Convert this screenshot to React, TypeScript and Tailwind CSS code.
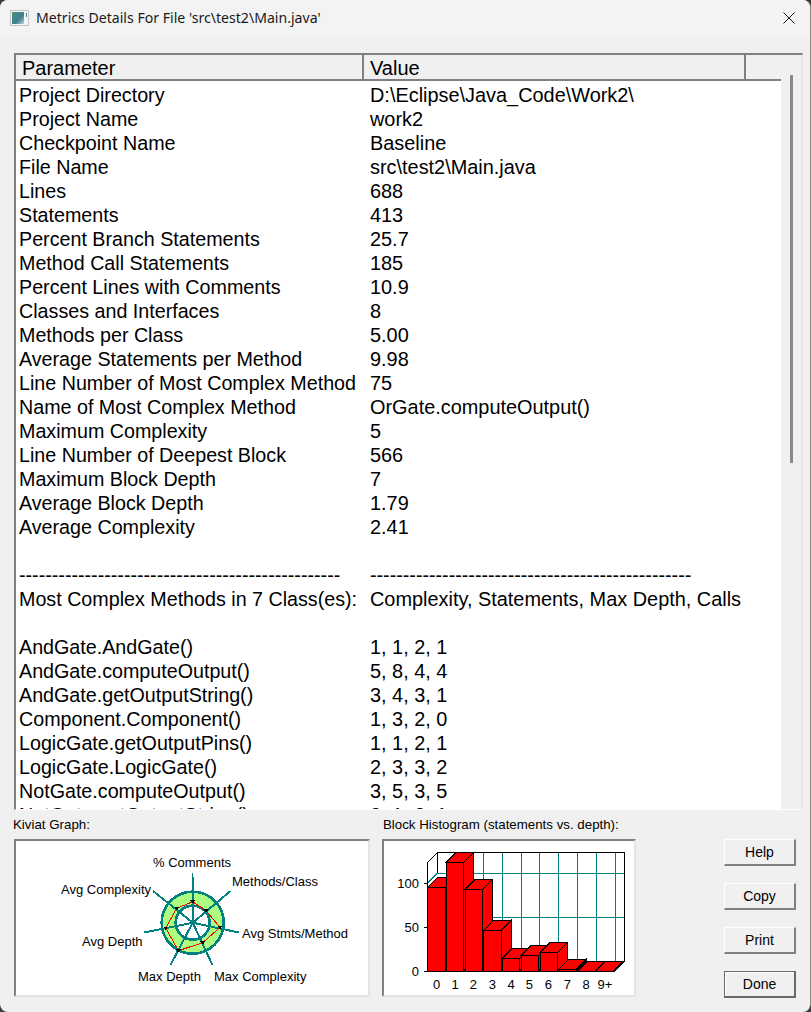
const dashes = '-------------------------------------------------'

const rows: [string, string][] = [
  ['Project Directory', 'D:\\Eclipse\\Java_Code\\Work2\\'],
  ['Project Name', 'work2'],
  ['Checkpoint Name', 'Baseline'],
  ['File Name', 'src\\test2\\Main.java'],
  ['Lines', '688'],
  ['Statements', '413'],
  ['Percent Branch Statements', '25.7'],
  ['Method Call Statements', '185'],
  ['Percent Lines with Comments', '10.9'],
  ['Classes and Interfaces', '8'],
  ['Methods per Class', '5.00'],
  ['Average Statements per Method', '9.98'],
  ['Line Number of Most Complex Method', '75'],
  ['Name of Most Complex Method', 'OrGate.computeOutput()'],
  ['Maximum Complexity', '5'],
  ['Line Number of Deepest Block', '566'],
  ['Maximum Block Depth', '7'],
  ['Average Block Depth', '1.79'],
  ['Average Complexity', '2.41'],
  ['', ''],
  [dashes, dashes],
  ['Most Complex Methods in 7 Class(es):', 'Complexity, Statements, Max Depth, Calls'],
  ['', ''],
  ['AndGate.AndGate()', '1, 1, 2, 1'],
  ['AndGate.computeOutput()', '5, 8, 4, 4'],
  ['AndGate.getOutputString()', '3, 4, 3, 1'],
  ['Component.Component()', '1, 3, 2, 0'],
  ['LogicGate.getOutputPins()', '1, 1, 2, 1'],
  ['LogicGate.LogicGate()', '2, 3, 3, 2'],
  ['NotGate.computeOutput()', '3, 5, 3, 5'],
  ['NotGate.getOutputString()', '2, 1, 2, 1'],
]

const spokes = [
  [192.5, 873],
  [230.5, 891],
  [239, 932.5],
  [212.5, 965],
  [170.5, 965],
  [144, 932.5],
  [153, 891],
]

const kiviatPoints = [
  [192.7, 901.7],
  [206, 910.7],
  [220, 927.3],
  [202.7, 942.7],
  [178.3, 950.7],
  [165.7, 928],
  [176.7, 908.3],
]

const kiviatLabels: [string, number, number][] = [
  ['% Comments', 153, 867],
  ['Methods/Class', 232, 886],
  ['Avg Stmts/Method', 242, 938],
  ['Max Complexity', 214, 981],
  ['Max Depth', 138, 981],
  ['Avg Depth', 82, 946],
  ['Avg Complexity', 61, 894],
]

// front left x, front top y of each bar
const bars = [
  [427.7, 887.3],
  [446.3, 862.3],
  [465.3, 889.3],
  [483.7, 930.3],
  [502.3, 958.3],
  [521.3, 955.3],
  [540.3, 952.3],
  [559, 969.3],
  [578, 971],
  [596.3, 971],
]

const backLines = [483.5, 502.5, 521.5, 539.5, 558.5, 577.5, 596.5, 615.5]
const xLabels = ['0', '1', '2', '3', '4', '5', '6', '7', '8', '9+']
const xCenters = [436.7, 455, 473.3, 492.3, 511, 529.3, 548.3, 567.3, 586, 605]

function KiviatGraph() {
  const cx = 192.7
  const cy = 922.7
  return (
    <svg viewBox="16 841 352 154" className="block w-[352px] h-[154px]">
      <g shapeRendering="crispEdges">
        <circle cx={cx} cy={cy} r={31} fill="#adff7f" stroke="#008080" strokeWidth={2.6} />
        <circle cx={cx} cy={cy} r={17} fill="#fff" stroke="#008080" strokeWidth={2.6} />
        {spokes.map(([x, y], i) => (
          <line key={i} x1={cx} y1={cy} x2={x} y2={y} stroke="#008080" strokeWidth={2} />
        ))}
        <polygon points={kiviatPoints.map((p) => p.join(',')).join(' ')} fill="none" stroke="#ff0000" strokeWidth={1} />
        {kiviatPoints.map(([x, y], i) => (
          <polygon key={i} points={`${x - 2.5},${y - 1.5} ${x + 2.5},${y - 1.5} ${x},${y + 2}`} fill="#000" />
        ))}
      </g>
      {kiviatLabels.map(([label, x, y]) => (
        <text key={label} x={x} y={y} fontSize={13} fill="#000" fontFamily="'Liberation Sans', sans-serif">
          {label}
        </text>
      ))}
    </svg>
  )
}

function BlockHistogram() {
  const w = 17.3
  const d = 10
  const base = 971
  return (
    <svg viewBox="384 841 250 154" className="block w-[250px] h-[154px]">
      <g shapeRendering="crispEdges">
        {/* back wall grid */}
        {[873.5, 917.5].map((y) => (
          <line key={y} x1={437.5} y1={y} x2={624.5} y2={y} stroke="#008080" strokeWidth={1} />
        ))}
        {backLines.map((x) => (
          <line key={x} x1={x} y1={852.5} x2={x} y2={961.5} stroke="#008080" strokeWidth={1} />
        ))}
        <line x1={427.3} y1={883.3} x2={437.3} y2={873} stroke="#008080" strokeWidth={1} />
        <line x1={437.5} y1={852.5} x2={437.5} y2={873} stroke="#000" strokeWidth={1} />
        <polyline points="427.5,971.5 427.5,862.5 437.5,852.5 624.5,852.5 624.5,961.5 614.5,971.5 427.5,971.5" fill="none" stroke="#000" strokeWidth={1} />
        {/* bars */}
        {bars.map(([x, top], i) => (
          <g key={i} stroke="#000" strokeWidth={1} fill="#ff0000">
            <polygon points={`${x + w},${top} ${x + w + d},${top - d} ${x + w + d},${base - d} ${x + w},${base}`} />
            <polygon points={`${x},${top} ${x + d},${top - d} ${x + w + d},${top - d} ${x + w},${top}`} />
            <rect x={x} y={top} width={w} height={base - top} />
          </g>
        ))}
        {/* axis */}
        {[883.5, 927.5, 971.5].map((y) => (
          <line key={y} x1={423.5} y1={y} x2={427.5} y2={y} stroke="#000" strokeWidth={1} />
        ))}
      </g>
      {[['100', 888], ['50', 932], ['0', 976]].map(([label, y]) => (
        <text key={label} x={419} y={y} textAnchor="end" fontSize={13} fill="#000" fontFamily="'Liberation Sans', sans-serif">
          {label}
        </text>
      ))}
      {xLabels.map((label, i) => (
        <text key={label} x={xCenters[i]} y={989} textAnchor="middle" fontSize={13} fill="#000" fontFamily="'Liberation Sans', sans-serif">
          {label}
        </text>
      ))}
    </svg>
  )
}

function DialogButton({ label, isDefault }: { label: string; isDefault?: boolean }) {
  return (
    <button
      className={`w-[72px] h-[27px] bg-[#f0f0f0] text-[14px] text-black flex items-center justify-center ${
        isDefault
          ? 'border border-r-2 border-b-2 border-[#696969] shadow-[inset_1px_1px_0_#fff]'
          : 'border border-t-white border-l-white border-r-2 border-b-2 border-r-[#808080] border-b-[#808080]'
      }`}
    >
      {label}
    </button>
  )
}

export default function App() {
  return (
    <div className="w-[811px] h-[1012px] bg-[#3c3c3c] font-['Liberation_Sans',sans-serif] overflow-hidden">
      <div className="w-full h-full rounded-[8px] bg-[#f0f0f0] flex flex-col overflow-hidden border-r border-[#8a8a8a]">
        {/* title bar */}
        <div className="h-[38px] shrink-0 bg-[#f3f3f3] flex items-center pl-[10px] pr-[15px] pb-[2px]">
          <svg width="19" height="16" viewBox="0 0 19 16" className="mr-[7px] shrink-0">
            <rect x="0.5" y="0.5" width="18" height="15" fill="#f6f6f6" stroke="#c4c4c4" />
            <defs>
              <linearGradient id="pane" x1="0" y1="0" x2="1" y2="1">
                <stop offset="0" stopColor="#4f8f7f" />
                <stop offset="0.6" stopColor="#3f7f8f" />
                <stop offset="1" stopColor="#bcd8d8" />
              </linearGradient>
            </defs>
            <rect x="2" y="2" width="12" height="12" fill="url(#pane)" />
            <rect x="16" y="3" width="1" height="4" fill="#3f8f8f" />
          </svg>
          <span className="text-[14.1px] text-[#1a1a1a] font-['Noto_Sans',sans-serif] whitespace-nowrap">
            Metrics Details For File 'src\test2\Main.java'
          </span>
          <svg width="12" height="12" viewBox="0 0 12 12" className="ml-auto shrink-0">
            <path d="M0.5 0.5 L11.5 11.5 M11.5 0.5 L0.5 11.5" stroke="#1a1a1a" strokeWidth="1" fill="none" />
          </svg>
        </div>

        {/* metrics table */}
        <div className="mt-[15px] ml-[14px] w-[789px] h-[757px] shrink-0 flex border-t-2 border-l-2 border-t-[#808080] border-l-[#808080] border-r border-b border-r-[#e4e4e4] border-b-[#ffffff] overflow-hidden">
          <div className="w-[765px] shrink-0 flex flex-col">
            <div className="h-[26px] shrink-0 flex bg-[#f0f0f0] border-b-2 border-[#808080] text-[20px] leading-[26px] text-black">
              <div className="w-[348px] pl-[6px] border-r-2 border-[#808080]">Parameter</div>
              <div className="w-[382px] pl-[6px] border-r-2 border-[#808080]">Value</div>
            </div>
            <div className="flex-1 bg-white pt-[2px] overflow-hidden text-[19.7px] leading-[24px] text-black">
              {rows.map(([name, value], i) => (
                <div key={i} className="h-[24px] flex whitespace-nowrap">
                  <div className="w-[354px] pl-[3px] shrink-0">{name}</div>
                  <div className={value === dashes ? '' : 'text-[19.9px]'}>{value}</div>
                </div>
              ))}
            </div>
          </div>
          <div className="flex-1 bg-[#f0f0f0] pt-[20px] pl-[9px] border-r border-[#e4e4e4]">
            <div className="w-[3px] h-[388px] bg-[#8a8a8a]" />
          </div>
        </div>

        {/* bottom panel */}
        <div className="flex-1 flex pl-[14px] pr-[14px] pt-[7px]">
          <div className="w-[356px] mr-[12px] shrink-0">
            <div className="h-[15px] text-[13.3px] leading-[16px] text-black -ml-px whitespace-nowrap">Kiviat Graph:</div>
            <div className="mt-[7px] w-[356px] h-[158px] bg-white border-2 border-t-[#808080] border-l-[#808080] border-r-[#e4e4e4] border-b-[#e4e4e4]">
              <KiviatGraph />
            </div>
          </div>
          <div className="w-[254px] shrink-0">
            <div className="h-[15px] text-[13.3px] leading-[16px] text-black ml-px whitespace-nowrap">Block Histogram (statements vs. depth):</div>
            <div className="mt-[7px] w-[254px] h-[158px] bg-white border-2 border-t-[#808080] border-l-[#808080] border-r-[#e4e4e4] border-b-[#e4e4e4]">
              <BlockHistogram />
            </div>
          </div>
          <div className="ml-auto pt-[22px] flex flex-col gap-[17px]">
            <DialogButton label="Help" />
            <DialogButton label="Copy" />
            <DialogButton label="Print" />
            <DialogButton label="Done" isDefault />
          </div>
        </div>
      </div>
    </div>
  )
}
